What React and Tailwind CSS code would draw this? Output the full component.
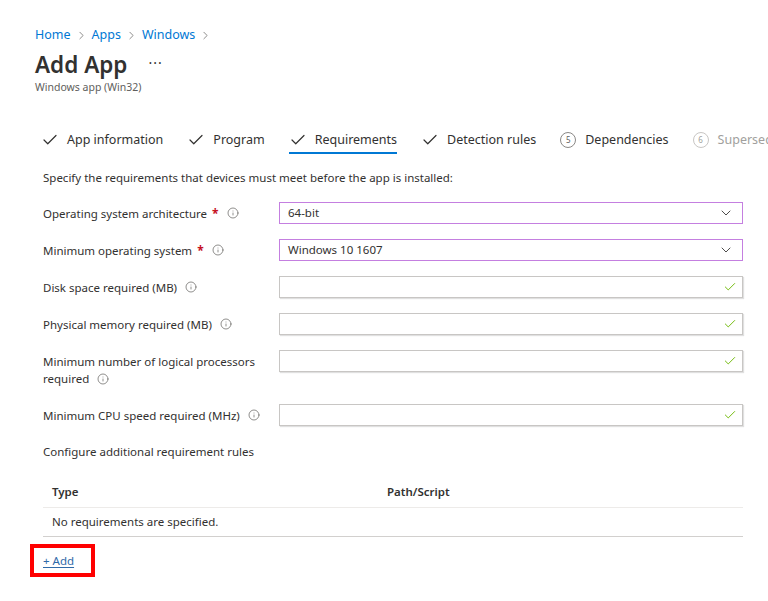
import React from 'react';
import { Check, ChevronDown, ChevronRight, Info } from 'lucide-react';

const tabs = [
  { label: 'App information', done: true },
  { label: 'Program', done: true },
  { label: 'Requirements', done: true, active: true },
  { label: 'Detection rules', done: true },
  { label: 'Dependencies', num: 5 },
  { label: 'Supersedence (preview)', num: 6, muted: true },
];

const fields = [
  { label: 'Operating system architecture', required: true, select: '64-bit' },
  { label: 'Minimum operating system', required: true, select: 'Windows 10 1607' },
  { label: 'Disk space required (MB)' },
  { label: 'Physical memory required (MB)' },
  { label: 'Minimum number of logical processors', label2: 'required', tall: true },
  { label: 'Minimum CPU speed required (MHz)' },
];

const InfoIcon = () => (
  <Info size={12} strokeWidth={1.4} className="inline-block text-[#605e5c] ml-[8px] -mt-[2px]" />
);

const Field = ({ f }) => (
  <div className={`flex ${f.tall ? 'items-start mb-[17px]' : 'items-center mb-[15px]'}`}>
    <div className={`w-[236px] shrink-0 whitespace-nowrap text-[11.5px] leading-[17px] text-[#323130] ${f.tall ? 'pt-[3px]' : ''}`}>
      {f.label}
      {f.required && <span className="text-[#c50f1f] text-[12px] font-bold ml-[5px]">*</span>}
      {!f.label2 && <InfoIcon />}
      {f.label2 && (
        <div>
          {f.label2}
          <InfoIcon />
        </div>
      )}
    </div>
    {f.select ? (
      <div className="w-[464px] h-[22px] border border-[#c47fe0] flex items-center justify-between pl-[8px] pr-[8px] text-[11.5px] text-[#323130]">
        <span>{f.select}</span>
        <ChevronDown size={16} strokeWidth={1.3} className="text-[#323130]" />
      </div>
    ) : (
      <div className="w-[464px] h-[22px] border border-[#c8c6c4] shadow-[1px_1px_1px_rgba(0,0,0,0.12)] flex items-center justify-end pr-[5px]">
        <Check size={14} strokeWidth={1.6} className="text-[#6bb700]" />
      </div>
    )}
  </div>
);

const App = () => {
  return (
    <div className="w-[768px] h-[601px] overflow-hidden bg-white font-['Noto_Sans','Open_Sans',sans-serif] text-[#323130]">
      {/* header */}
      <div className="pl-[35px] pt-[25px]">
        <div className="flex items-center h-[20px] text-[12.5px] text-[#0078d4]">
          <span>Home</span>
          <ChevronRight size={13} strokeWidth={1.3} className="text-[#605e5c] mx-[4px]" />
          <span>Apps</span>
          <ChevronRight size={13} strokeWidth={1.3} className="text-[#605e5c] mx-[4px]" />
          <span>Windows</span>
          <ChevronRight size={13} strokeWidth={1.3} className="text-[#605e5c] mx-[4px]" />
        </div>
        <div className="flex items-center mt-[6px] h-[28px]">
          <span className="text-[22.5px] font-semibold leading-[28px] text-[#323130]">Add App</span>
          <span className="ml-[21px] text-[14px] text-[#323130] -mt-[6px] tracking-[1px]">···</span>
        </div>
        <div className="text-[10.5px] leading-[14px] mt-[1px] text-[#605e5c]">Windows app (Win32)</div>
      </div>

      {/* tabs */}
      <div className="flex items-start gap-[24px] pl-[41px] mt-[36px] whitespace-nowrap overflow-hidden">
        {tabs.map(t => (
          <div key={t.label} className="flex flex-col shrink-0">
            <div className={`flex items-center h-[20px] text-[12.5px] ${t.muted ? 'text-[#a19f9d]' : 'text-[#323130]'}`}>
              {t.done ? (
                <Check size={18} strokeWidth={1.6} className="text-[#323130] mr-[8px]" />
              ) : (
                <span className={`w-[16px] h-[16px] mr-[9px] rounded-full border flex items-center justify-center text-[8px] leading-none ${t.muted ? 'border-[#c8c6c4] text-[#a19f9d]' : 'border-[#8a8886] text-[#605e5c]'}`}>
                  {t.num}
                </span>
              )}
              <span>{t.label}</span>
            </div>
            <div className={`mt-[2px] h-[2px] ${t.active ? 'bg-[#0078d4]' : 'bg-transparent'}`} />
          </div>
        ))}
      </div>

      {/* form */}
      <div className="pl-[43px] w-[743px]">
        <div className="mt-[14px] text-[11.5px] leading-[20px] text-[#323130]">
          Specify the requirements that devices must meet before the app is installed:
        </div>
        <div className="mt-[14px] flex flex-col">
          {fields.map(f => <Field key={f.label} f={f} />)}
        </div>
        <div className="mt-[2px] text-[11.5px] leading-[17px] text-[#323130]">
          Configure additional requirement rules
        </div>

        <div className="mt-[16px] w-[700px] text-[11.5px]">
          <div className="flex items-center h-[32px] border-b border-[#edebe9] font-semibold text-[#323130]">
            <div className="w-[344px] pl-[9px]">Type</div>
            <div>Path/Script</div>
          </div>
          <div className="flex items-center h-[29px] border-b border-[#d2d0ce] pl-[9px] text-[#323130]">
            No requirements are specified.
          </div>
        </div>

        <div className="mt-[7px] -ml-[13px] w-[65px] h-[33px] border-[4px] border-[#ff0000] flex items-center pl-[9px]">
          <span className="text-[11.5px] text-[#2f6aa8] underline underline-offset-2">+ Add</span>
        </div>
      </div>
    </div>
  );
};

export default App;
